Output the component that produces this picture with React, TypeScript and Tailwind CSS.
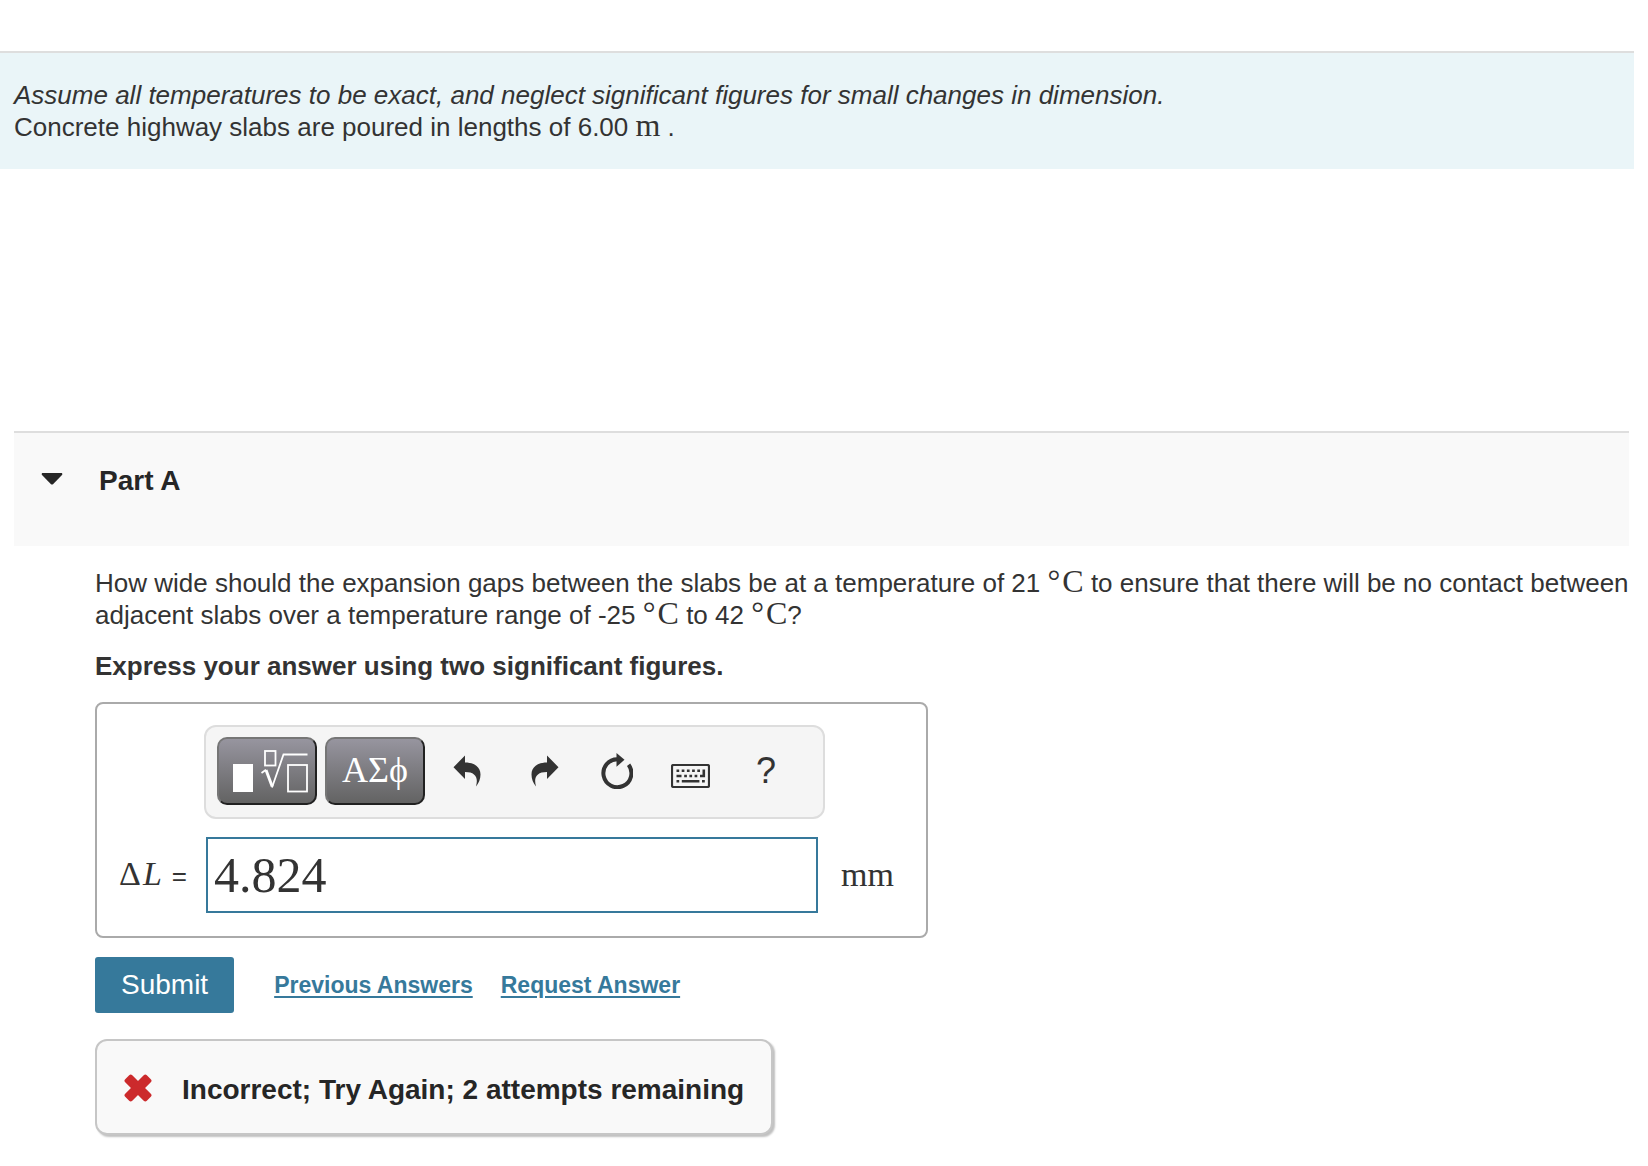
import { useState, FormEvent, ReactNode } from "react";

const links = [
  { href: "#previous", label: "Previous Answers" },
  { href: "#request", label: "Request Answer" },
];

function UndoIcon() {
  return (
    <svg width="28" height="32" viewBox="0 0 28 32" fill="currentColor" aria-hidden="true">
      <path d="M12 0.5 V7.5 C21.5 7.5 27.5 12 27.5 19.5 C27.5 24 25.8 28 23 31.5 C25.5 22.5 22.5 17 12 17 V24 L0.5 12.2 Z" />
    </svg>
  );
}

function RedoIcon() {
  return (
    <svg width="28" height="32" viewBox="0 0 28 32" fill="currentColor" aria-hidden="true">
      <path d="M16 0.5 V7.5 C6.5 7.5 0.5 12 0.5 19.5 C0.5 24 2.2 28 5 31.5 C2.5 22.5 5.5 17 16 17 V24 L27.5 12.2 Z" />
    </svg>
  );
}

function ResetIcon() {
  return (
    <svg width="32" height="36" viewBox="0 0 32 36" aria-hidden="true">
      <path
        d="M27.6 11.8 A14 14 0 1 1 16.5 6.2"
        fill="none"
        stroke="currentColor"
        strokeWidth="4"
      />
      <path d="M15.5 0 L23.5 6.8 L15.5 13.8 Z" fill="currentColor" />
    </svg>
  );
}

function KeyboardIcon() {
  return (
    <svg width="39" height="24" viewBox="0 0 39 24" aria-hidden="true">
      <rect x="1" y="1" width="37" height="22" rx="1.5" fill="none" stroke="currentColor" strokeWidth="2.2" />
      <path
        d="M5.5 6.8 H30.5 M13.2 12 H28"
        stroke="currentColor"
        strokeWidth="2.6"
        strokeDasharray="2.7 2.5"
      />
      <path
        d="M32.8 5.5 V12 H29 M5.5 12 H10.5 M5.5 17.2 H8.2 M10.8 17.2 H28.4 M31 17.2 H33.8"
        fill="none"
        stroke="currentColor"
        strokeWidth="2.6"
      />
    </svg>
  );
}

function TemplateIcon() {
  return (
    <svg width="76" height="44" viewBox="0 0 76 44" fill="none" stroke="white" aria-hidden="true">
      <rect x="1" y="15" width="20" height="28" fill="white" stroke="none" />
      <rect x="33" y="2" width="10.5" height="14.5" strokeWidth="1.8" />
      <path d="M29.5 24 L34 20.8" strokeWidth="1.8" />
      <path d="M34 21 L40.2 37.5" strokeWidth="3" />
      <path d="M40 38.5 L51.5 5.5 H75.5" strokeWidth="1.8" />
      <rect x="56" y="16" width="19" height="26.5" strokeWidth="1.8" />
    </svg>
  );
}

function WrongIcon() {
  return (
    <svg width="28" height="28" viewBox="0 0 28 28" fill="#cc2a2c" className="mb-1 shrink-0" aria-hidden="true">
      <rect x="-1.3" y="9" width="30.6" height="10" rx="2.2" transform="rotate(45 14 14)" />
      <rect x="-1.3" y="9" width="30.6" height="10" rx="2.2" transform="rotate(-45 14 14)" />
    </svg>
  );
}

function ToolButton({ label, className, children }: { label: string; className: string; children: ReactNode }) {
  return (
    <button type="button" aria-label={label} className={`flex shrink-0 items-center justify-center ${className}`}>
      {children}
    </button>
  );
}

const darkButton =
  "w-[100px] h-[68px] rounded-[10px] border-2 border-t-[#767676] border-l-[#767676] border-r-[#212121] border-b-[#212121] bg-linear-to-b from-[#97959f] to-[#636363] text-white";

function Unit({ children }: { children: ReactNode }) {
  return <span className="font-['Liberation_Serif',serif] text-[32px] leading-6">{children}</span>;
}

function Celsius() {
  return (
    <span className="inline-flex gap-0.5 font-['Liberation_Serif',serif] text-[32px] leading-6">
      <span>°</span>
      <span>C</span>
    </span>
  );
}

export default function App() {
  const [answer, setAnswer] = useState("4.824");
  const [open, setOpen] = useState(true);

  function handleSubmit(e: FormEvent) {
    e.preventDefault();
  }

  return (
    <main className="bg-white pt-[51px] pb-8 font-['Liberation_Sans',Arial,sans-serif] text-[26px] leading-8 text-[#333]">
      {/* Problem statement */}
      <section className="mr-3.5 border-t-2 border-[#dedede] bg-[#eaf5f8] px-3.5 py-[26px]">
        <p className="italic">
          Assume all temperatures to be exact, and neglect significant figures for small changes in dimension.
        </p>
        <p>
          Concrete highway slabs are poured in lengths of 6.00 <Unit>m</Unit> .
        </p>
      </section>

      <section className="mt-[262px] mr-[19px] ml-3.5">
        <h2 className="border-t-2 border-[#dedede] bg-[#f9f9f9] px-[27px] pt-8 pb-[49px] text-[28px] font-bold text-[#262626]">
          <button
            type="button"
            aria-expanded={open}
            onClick={() => setOpen(!open)}
            className="flex items-center gap-9"
          >
            <svg width="22" height="12" viewBox="0 0 22 12" fill="currentColor" className="mb-1" aria-hidden="true">
              <path d="M1.2 0 H20.8 Q22 0.8 21 2 L12 11.2 Q11 12 10 11.2 L1 2 Q0 0.8 1.2 0 Z" />
            </svg>
            Part A
          </button>
        </h2>

        {open && (
          <form onSubmit={handleSubmit} className="pt-[21px] pl-[81px]">
            <p className="-mr-2">
              How wide should the expansion gaps between the slabs be at a temperature of 21 <Celsius /> to ensure that
              there will be no contact between adjacent slabs over a temperature range of -25 <Celsius /> to 42{" "}
              <Celsius />?
            </p>
            <p className="mt-[19px] font-bold">Express your answer using two significant figures.</p>

            {/* Answer entry */}
            <div className="mt-5 w-fit rounded-lg border-2 border-[#aaa] px-[22px] pt-[21px] pb-[23px]">
              <div className="ml-[85px] flex w-[621px] items-center rounded-xl border-2 border-[#ddd] bg-[#f5f5f5] px-[11px] pt-2.5 pb-3">
                <button
                  type="button"
                  aria-label="Templates"
                  className={`flex items-center justify-center pl-[5px] ${darkButton}`}
                >
                  <TemplateIcon />
                </button>
                <button
                  type="button"
                  aria-label="Symbols"
                  className={`ml-2 pb-0.5 font-['Liberation_Serif',serif] text-[36px] ${darkButton}`}
                >
                  ΑΣϕ
                </button>
                <div className="ml-7 flex flex-1 items-center">
                  <ToolButton label="Undo" className="mr-[50px]">
                    <UndoIcon />
                  </ToolButton>
                  <ToolButton label="Redo" className="mr-[42px]">
                    <RedoIcon />
                  </ToolButton>
                  <ToolButton label="Reset" className="mr-[38px]">
                    <ResetIcon />
                  </ToolButton>
                  <ToolButton label="Keyboard shortcuts" className="mr-[46px] pt-2.5">
                    <KeyboardIcon />
                  </ToolButton>
                  <ToolButton label="Help" className="text-[36px]">
                    ?
                  </ToolButton>
                </div>
              </div>

              <div className="mt-[18px] flex items-center">
                <label htmlFor="answer" className="flex w-[87px] items-baseline gap-2.5">
                  <span className="flex gap-0.5 font-['Liberation_Serif',serif] text-[34px]">
                    <span>Δ</span>
                    <i>L</i>
                  </span>
                  <span>=</span>
                </label>
                <input
                  id="answer"
                  type="text"
                  value={answer}
                  onChange={(e) => setAnswer(e.target.value)}
                  className="h-[76px] w-[612px] border-2 border-[#36799b] bg-white px-1.5 font-['Liberation_Serif',serif] text-[50px] outline-none"
                />
                <span className="ml-[23px] w-[63px] font-['Liberation_Serif',serif] text-[34px]">mm</span>
              </div>
            </div>

            <div className="mt-[19px] flex items-center">
              <button type="submit" className="h-14 rounded-[3px] bg-[#36799b] px-[26px] text-[28px] text-white">
                Submit
              </button>
              <nav className="ml-10 flex gap-7 text-[23px] font-bold text-[#36799b]">
                {links.map((link) => (
                  <a key={link.href} href={link.href} className="underline decoration-2 underline-offset-3">
                    {link.label}
                  </a>
                ))}
              </nav>
            </div>

            {/* Feedback */}
            <div
              role="status"
              className="mt-[26px] flex w-fit items-center gap-[30px] rounded-xl border-2 border-[#c6c6c6] bg-[#f9f9f9] px-[27px] pt-[33px] pb-[27px] text-[28px] font-bold text-[#262626] shadow-[2px_2px_2px_#c0c0c0]"
            >
              <WrongIcon />
              Incorrect; Try Again; 2 attempts remaining
            </div>
          </form>
        )}
      </section>
    </main>
  );
}
